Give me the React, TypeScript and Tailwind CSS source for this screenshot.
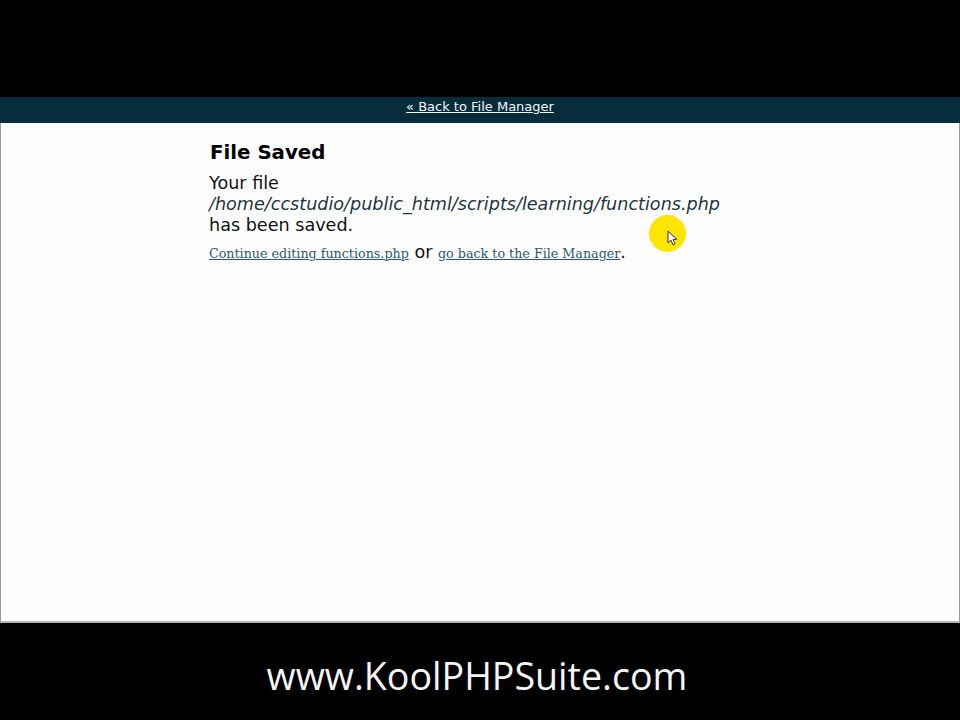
export default function App() {
  return (
    <div className="w-[960px] h-[720px] bg-black flex flex-col overflow-hidden font-['DejaVu_Sans',sans-serif]">
      <div className="h-[97px] shrink-0" />
      <div className="h-[26px] shrink-0 bg-[#072c3c] flex justify-center items-start pt-[1px]">
        <a href="#" className="text-[13px] leading-[18px] text-[#f4f8f9] underline">
          « Back to File Manager
        </a>
      </div>
      <div className="relative h-[500px] shrink-0 bg-[#fefdfe] border-x border-[#9a9a9a] border-b-2 border-b-[#b5b5b5] pl-[208px] pt-[18px]">
        <h1 className="pl-[1px] text-[19.8px] leading-[24px] font-bold text-black">File Saved</h1>
        <p className="mt-[8px] text-[17.6px] leading-[21px] text-[#111]">
          Your file
          <br />
          <em className="text-[#1d3540]">/home/ccstudio/public_html/scripts/learning/functions.php</em>
          <br />
          has been saved.
        </p>
        <p className="mt-[6px] text-[17.6px] leading-[21px] text-[#111]">
          <a href="#" className="font-['DejaVu_Serif',serif] text-[12.7px] text-[#2a5a6b] underline">
            Continue editing functions.php
          </a>{" "}
          or{" "}
          <a href="#" className="font-['DejaVu_Serif',serif] text-[12.7px] text-[#2a5a6b] underline">
            go back to the File Manager
          </a>
          .
        </p>
        <div className="absolute left-[648px] top-[92px] w-[37px] h-[37px] rounded-full bg-[#fde500]" />
        <svg className="absolute left-[666px] top-[107px]" width="12" height="17" viewBox="0 0 12 17">
          <path d="M1 1v12l3-2.8 2 4.6 2-.9-2-4.5h4z" fill="#fff" stroke="#333" strokeWidth="1" />
        </svg>
      </div>
      <div className="flex-1 flex justify-center pt-[30px] pr-[6px]">
        <span className="font-['Open_Sans',sans-serif] text-[37.6px] leading-[46px] text-[#f5f5f5]">
          www.KoolPHPSuite.com
        </span>
      </div>
    </div>
  );
}
